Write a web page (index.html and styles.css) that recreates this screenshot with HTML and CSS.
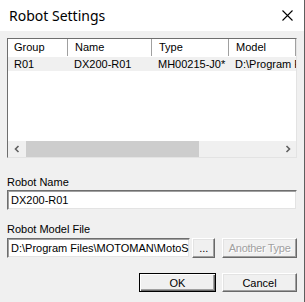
FILE: index.html
```html
<!DOCTYPE html>
<html lang="en">
<head>
    <meta charset="UTF-8">
    <title>Robot Settings</title>
    <link rel="stylesheet" href="styles.css">
</head>
<body>
    <div class="window">
        <!-- Barre de titre -->
        <div class="titlebar">
            <span class="title">Robot Settings</span>
            <svg class="close" width="11" height="11" viewBox="0 0 11 11">
                <path d="M0.5 0.5 L10.5 10.5 M10.5 0.5 L0.5 10.5" stroke="#000" stroke-width="1.1" fill="none"/>
            </svg>
        </div>

        <div class="content">
            <!-- Liste des robots -->
            <div class="listview">
                <div class="list-header">
                    <div class="col col-group">Group</div>
                    <div class="col col-name">Name</div>
                    <div class="col col-type">Type</div>
                    <div class="col col-model">Model</div>
                </div>
                <div class="list-row">
                    <div class="cell col-group">R01</div>
                    <div class="cell col-name">DX200-R01</div>
                    <div class="cell col-type">MH00215-J0*</div>
                    <div class="cell col-model">D:\Program F</div>
                </div>
                <div class="list-empty"></div>
                <div class="hscroll">
                    <div class="arrow">
                        <svg width="8" height="8" viewBox="0 0 8 8"><path d="M5.5 1 L2.5 4 L5.5 7" stroke="#606060" stroke-width="1.6" fill="none"/></svg>
                    </div>
                    <div class="track"><div class="thumb"></div></div>
                    <div class="arrow">
                        <svg width="8" height="8" viewBox="0 0 8 8"><path d="M2.5 1 L5.5 4 L2.5 7" stroke="#606060" stroke-width="1.6" fill="none"/></svg>
                    </div>
                </div>
            </div>

            <label class="field-label">Robot Name</label>
            <div class="textbox full">DX200-R01</div>

            <label class="field-label second">Robot Model File</label>
            <div class="file-row">
                <div class="textbox file">D:\Program Files\MOTOMAN\MotoS</div>
                <button class="btn browse">...</button>
                <button class="btn another" disabled>Another Type</button>
            </div>

            <div class="actions">
                <button class="btn default">OK</button>
                <button class="btn">Cancel</button>
            </div>
        </div>
    </div>
</body>
</html>
```

FILE: styles.css
```css
body {
    margin: 0;
    padding: 0;
    font-family: "Liberation Sans", Arial, sans-serif;
    font-size: 11px;
    color: #000;
}

.window {
    width: 304px;
    height: 302px;
    border-right: 1px solid #5e5e5e;
    display: flex;
    flex-direction: column;
    background: #f0f0f0;
}

.titlebar {
    height: 31px;
    background: #fff;
    display: flex;
    align-items: center;
    justify-content: space-between;
    padding: 0 11px 0 9px;
    flex-shrink: 0;
}

.title {
    font-family: "Noto Sans", "Open Sans", sans-serif;
    font-size: 14px;
    margin-top: -1px;
}

.close {
    margin-top: -1px;
}

.content {
    flex: 1;
    padding: 7px 7px 0 7px;
    display: flex;
    flex-direction: column;
}

/* Liste */
.listview {
    height: 120px;
    box-sizing: border-box;
    border: 1px solid;
    border-color: #6e6e6e #e3e3e3 #e3e3e3 #6e6e6e;
    background: #fff;
    display: flex;
    flex-direction: column;
    overflow: hidden;
}

.list-header {
    display: flex;
    height: 17px;
    flex-shrink: 0;
}

.col {
    border-right: 1px solid #e1e1e1;
    border-left: 1px solid #fff;
    box-sizing: border-box;
    padding: 2px 0 0 6px;
    white-space: nowrap;
    overflow: hidden;
}

.list-header .col-group {
    border-left: none;
}

.list-header .col {
    border-right-color: #a0a0a0;
}

.list-row {
    display: flex;
    height: 14px;
    margin-top: 1px;
    background: #f0f0f0;
    flex-shrink: 0;
}

.cell {
    box-sizing: border-box;
    padding: 1px 0 0 6px;
    white-space: nowrap;
    overflow: hidden;
}

.col-group { width: 60px; }
.col-name { width: 84px; }
.col-type { width: 77px; }
.col-model { width: 67px; flex-shrink: 0; }

.list-empty {
    flex: 1;
}

.hscroll {
    height: 16px;
    display: flex;
    background: #f0f0f0;
    flex-shrink: 0;
}

.arrow {
    width: 17px;
    display: flex;
    align-items: center;
    justify-content: center;
}

.track {
    flex: 1;
    display: flex;
    padding: 0 1px;
}

.thumb {
    width: 173px;
    background: #cdcdcd;
}

/* Champs */
.field-label {
    display: block;
    margin-top: 18px;
    line-height: 13px;
}

.field-label.second {
    margin-top: 13px;
}

.textbox {
    box-sizing: border-box;
    height: 20px;
    margin-top: 1px;
    background: #fff;
    border: 1px solid;
    border-color: #6e6e6e #f0f0f0 #f0f0f0 #6e6e6e;
    box-shadow: inset 1px 1px 0 #a0a0a0, inset -1px -1px 0 #e3e3e3;
    padding: 3px 0 0 3px;
    white-space: nowrap;
    overflow: hidden;
}

.file-row {
    display: flex;
    margin-top: 2px;
    height: 20px;
}

.file-row .textbox {
    margin-top: 0;
    width: 184px;
}

.btn {
    font-family: "Liberation Sans", Arial, sans-serif;
    font-size: 11px;
    color: #000;
    background: #f0f0f0;
    border: 1px solid;
    border-color: #fff #696969 #696969 #fff;
    box-shadow: inset -1px -1px 0 #a0a0a0, inset 1px 1px 0 #e3e3e3;
    padding: 0;
    height: 20px;
    box-sizing: border-box;
    white-space: nowrap;
}

.browse {
    width: 23px;
    margin-left: 2px;
}

.another {
    width: 75px;
    margin-left: 7px;
    color: #a0a0a0;
    text-shadow: 1px 1px 0 #fff;
    letter-spacing: -0.3px;
}

.actions {
    display: flex;
    justify-content: flex-end;
    gap: 6px;
    margin-top: 15px;
}

.actions .btn {
    width: 75px;
    height: 19px;
}

.actions .default {
    width: 77px;
    border-color: #000;
    box-shadow: inset 1px 1px 0 #fff, inset -1px -1px 0 #696969, inset -2px -2px 0 #a0a0a0;
}
```
